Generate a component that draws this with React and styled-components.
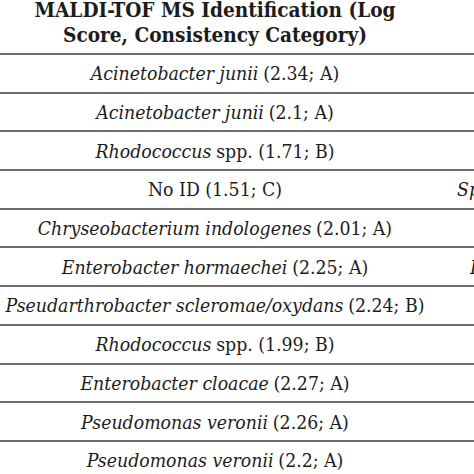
import React from 'react';
import styled, { createGlobalStyle } from 'styled-components';

const GlobalStyle = createGlobalStyle`
  html, body {
    margin: 0;
    padding: 0;
    background: #ffffff;
  }
  body {
    width: 474px;
    height: 474px;
    overflow: hidden;
  }
`;

const Table = styled.div`
  display: grid;
  grid-template-columns: 430px 320px;
  width: 474px;
  overflow: hidden;
  font-family: 'DejaVu Serif Condensed', 'DejaVu Serif', serif;
  font-stretch: condensed;
  color: #1c1c1c;
`;

const HeadCell = styled.div`
  box-sizing: border-box;
  height: 55px;
  padding-bottom: 5px;
  border-bottom: 2px solid #6e6e6e;
  display: flex;
  align-items: flex-end;
  justify-content: center;
  text-align: center;
  font-weight: bold;
  font-size: 20.6px;
  line-height: 25px;
`;

const Cell = styled.div`
  box-sizing: border-box;
  height: 38.7px;
  border-bottom: 2px solid #6e6e6e;
  display: flex;
  align-items: center;
  justify-content: ${({ $align }) => ($align === 'left' ? 'flex-start' : 'center')};
  padding-left: ${({ $indent }) => $indent || 0}px;
  padding-top: 1px;
  font-size: 19.3px;
  white-space: nowrap;
`;

const Taxon = styled.i`
  font-style: italic;
  margin-right: 0.25em;
`;

const rows = [
  { taxon: 'Acinetobacter junii', rest: '(2.34; A)' },
  { taxon: 'Acinetobacter junii', rest: '(2.1; A)' },
  { taxon: 'Rhodococcus', rest: 'spp. (1.71; B)' },
  { taxon: null, rest: 'No ID (1.51; C)', side: 'Sphingomonas', indent: 27 },
  { taxon: 'Chryseobacterium indologenes', rest: '(2.01; A)' },
  { taxon: 'Enterobacter hormaechei', rest: '(2.25; A)', side: 'Enterobacter', indent: 40 },
  { taxon: 'Pseudarthrobacter scleromae/oxydans', rest: '(2.24; B)' },
  { taxon: 'Rhodococcus', rest: 'spp. (1.99; B)' },
  { taxon: 'Enterobacter cloacae', rest: '(2.27; A)' },
  { taxon: 'Pseudomonas veronii', rest: '(2.26; A)' },
  { taxon: 'Pseudomonas veronii', rest: '(2.2; A)' },
];

export default function App() {
  return (
    <>
      <GlobalStyle />
      <Table>
        <HeadCell>
          <span>
            MALDI-TOF MS Identification (Log
            <br />
            Score, Consistency Category)
          </span>
        </HeadCell>
        <HeadCell />
        {rows.map((row, i) => (
          <React.Fragment key={i}>
            <Cell>
              {row.taxon && <Taxon>{row.taxon}</Taxon>}
              {row.rest}
            </Cell>
            <Cell $align="left" $indent={row.indent}>
              {row.side && <Taxon>{row.side}</Taxon>}
            </Cell>
          </React.Fragment>
        ))}
      </Table>
    </>
  );
}
